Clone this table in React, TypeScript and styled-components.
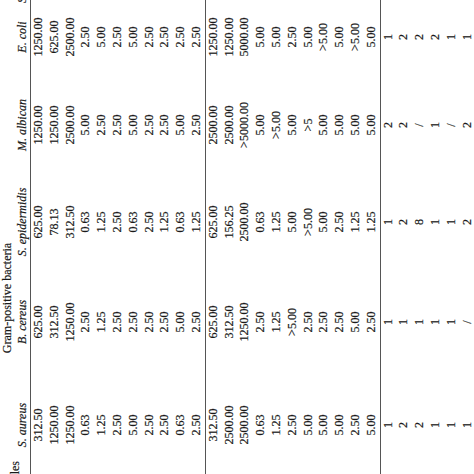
import React from "react";
import styled, { createGlobalStyle } from "styled-components";

const Global = createGlobalStyle`
  html, body { margin: 0; padding: 0; background: #ffffff; }
  body { width: 474px; height: 474px; overflow: hidden; }
`;

/* The page is a printed table turned a quarter turn counter-clockwise.
   LEAD is how far the table starts before the visible left edge (in table units). */
const LEAD = 60;
const COLS = [LEAD + 14, 70, 136, 64, 130, 46, 100];
const SHEET_W = COLS.reduce((a, b) => a + b, 0);
const TEMPLATE = COLS.map((c) => `${c}px`).join(" ");
const ROW_H = 15.8;

const Frame = styled.div`
  width: 474px;
  height: 474px;
  overflow: hidden;
  background: #ffffff;
`;

const Sheet = styled.div`
  width: ${SHEET_W}px;
  height: 474px;
  display: flex;
  flex-direction: column;
  transform-origin: 0 0;
  transform: translateY(${474 + LEAD}px) rotate(-90deg);
  font-family: "Liberation Serif", "Times New Roman", serif;
  font-size: 12px;
  color: #1a1a1a;
  -webkit-text-stroke: 0.2px #1a1a1a;
`;

const Head = styled.div`
  display: grid;
  grid-template-columns: ${TEMPLATE};
  grid-template-rows: 15px 15px;
  border-bottom: 1px solid #555555;
`;

const Group = styled.div<{ $rows: number; $last?: boolean }>`
  display: grid;
  grid-template-columns: ${TEMPLATE};
  grid-template-rows: repeat(${(p) => p.$rows}, ${ROW_H}px);
  border-bottom: ${(p) => (p.$last ? "none" : "1px solid #555555")};
`;

type Align = "left" | "center" | "right";
const justify = (a?: Align) => (a === "left" ? "flex-start" : a === "right" ? "flex-end" : "center");

const Cell = styled.div<{ $align?: Align }>`
  display: flex;
  justify-content: ${(p) => justify(p.$align)};
  line-height: ${ROW_H}px;
  white-space: nowrap;
`;

const HeadCell = styled.div<{ $align?: Align; $italic?: boolean; $pad?: number }>`
  display: flex;
  justify-content: ${(p) => justify(p.$align)};
  line-height: 15px;
  white-space: nowrap;
  font-style: ${(p) => (p.$italic ? "italic" : "normal")};
  padding-left: ${(p) => p.$pad ?? 0}px;
`;

const StubHead = styled(HeadCell)`
  grid-column: 1;
  grid-row: 1 / 3;
  align-self: center;
  padding-right: 1px;
`;

const SpanHead = styled(HeadCell)`
  grid-column: 3 / 5;
  grid-row: 1;
  padding-right: 16px;
`;

const species = ["S. aureus", "B. cereus", "S. epidermidis", "M. albican", "E. coli"];

const data: string[][] = [
  [
    "312.50", "1250.00", "1250.00", "0.63", "1.25", "2.50", "5.00", "2.50", "2.50", "0.63", "2.50",
    "312.50", "2500.00", "2500.00", "0.63", "1.25", "2.50", "5.00", "5.00", "5.00", "2.50", "5.00",
    "1", "2", "2", "1", "1", "1",
  ],
  [
    "625.00", "312.50", "1250.00", "2.50", "1.25", "2.50", "2.50", "2.50", "2.50", "5.00", "2.50",
    "625.00", "312.50", "1250.00", "2.50", "1.25", ">5.00", "2.50", "2.50", "2.50", "5.00", "2.50",
    "1", "1", "1", "1", "1", "/",
  ],
  [
    "625.00", "78.13", "312.50", "0.63", "1.25", "2.50", "0.63", "2.50", "1.25", "0.63", "1.25",
    "625.00", "156.25", "2500.00", "0.63", "1.25", "5.00", ">5.00", "5.00", "2.50", "1.25", "1.25",
    "1", "2", "8", "1", "1", "2",
  ],
  [
    "1250.00", "1250.00", "2500.00", "5.00", "2.50", "2.50", "5.00", "2.50", "2.50", "5.00", "2.50",
    "2500.00", "2500.00", ">5000.00", "5.00", ">5.00", "5.00", ">5", "5.00", "5.00", "5.00", "5.00",
    "2", "2", "/", "1", "/", "2",
  ],
  [
    "1250.00", "625.00", "2500.00", "2.50", "5.00", "2.50", "5.00", "2.50", "2.50", "2.50", "2.50",
    "1250.00", "1250.00", "5000.00", "5.00", "5.00", "2.50", "5.00", ">5.00", "5.00", ">5.00", "5.00",
    "1", "2", "2", "2", "1", "1",
  ],
];

const groups = [
  { start: 0, count: 11 },
  { start: 11, count: 11 },
  { start: 22, count: 6 },
];

export default function App() {
  return (
    <>
      <Global />
      <Frame>
        <Sheet>
          <Head>
            <StubHead $align="right">Samples</StubHead>
            <SpanHead>Gram-positive bacteria</SpanHead>
            {species.map((s, i) => (
              <HeadCell key={s} $italic style={{ gridColumn: i + 2, gridRow: 2 }}>
                {s}
              </HeadCell>
            ))}
            <HeadCell $italic $align="left" $pad={11} style={{ gridColumn: 7, gridRow: 2 }}>
              S. typhi
            </HeadCell>
          </Head>
          {groups.map((g, gi) => (
            <Group key={gi} $rows={g.count} $last={gi === groups.length - 1}>
              {Array.from({ length: g.count }).map((_, r) => (
                <React.Fragment key={r}>
                  <Cell $align="right" />
                  {data.map((col, c) => (
                    <Cell key={c}>{col[g.start + r]}</Cell>
                  ))}
                  <Cell />
                </React.Fragment>
              ))}
            </Group>
          ))}
        </Sheet>
      </Frame>
    </>
  );
}
